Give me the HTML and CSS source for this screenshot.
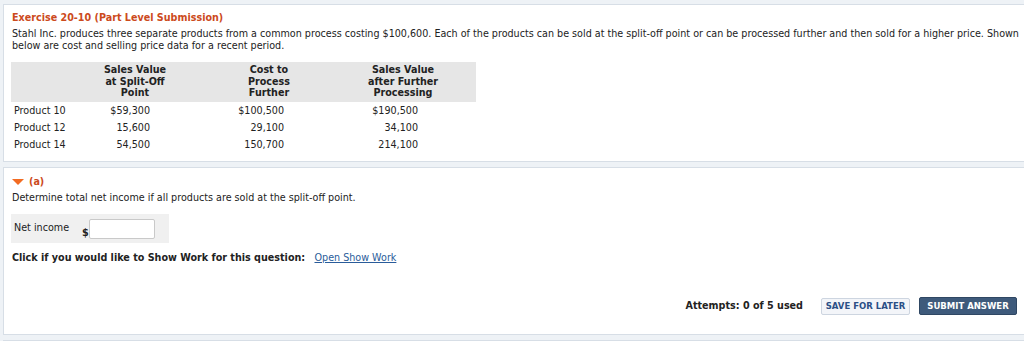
FILE: index.html
```html
<!DOCTYPE html>
<html lang="en">
<head>
  <meta charset="UTF-8" />
  <title>Exercise 20-10</title>
  <link rel="stylesheet" href="styles.css">
</head>
<body>
  <div class="panel question">
    <h2 class="title">Exercise 20-10 (Part Level Submission)</h2>
    <p class="intro">Stahl Inc. produces three separate products from a common process costing $100,600. Each of the products can be sold at the split-off point or can be processed further and then sold for a higher price. Shown below are cost and selling price data for a recent period.</p>

    <div class="data-table">
      <div class="head blank"></div>
      <div class="head">Sales Value<br>at Split-Off<br>Point</div>
      <div class="head">Cost to<br>Process<br>Further</div>
      <div class="head">Sales Value<br>after Further<br>Processing</div>
      <div class="head blank"></div>

      <div class="label">Product 10</div>
      <div class="num">$59,300</div>
      <div class="num">$100,500</div>
      <div class="num">$190,500</div>
      <div></div>

      <div class="label">Product 12</div>
      <div class="num">15,600</div>
      <div class="num">29,100</div>
      <div class="num">34,100</div>
      <div></div>

      <div class="label">Product 14</div>
      <div class="num">54,500</div>
      <div class="num">150,700</div>
      <div class="num">214,100</div>
      <div></div>
    </div>
  </div>

  <div class="panel part">
    <div class="part-title"><span class="caret"></span>(a)</div>
    <p class="prompt">Determine total net income if all products are sold at the split-off point.</p>

    <div class="answer-box">
      <span class="answer-label">Net income</span>
      <span class="dollar">$</span>
      <input type="text" class="answer-input">
    </div>

    <p class="show-work">Click if you would like to Show Work for this question: <a href="#">Open Show Work</a></p>

    <div class="actions">
      <span class="attempts">Attempts: 0 of 5 used</span>
      <button class="btn save">SAVE FOR LATER</button>
      <button class="btn submit">SUBMIT ANSWER</button>
    </div>
  </div>

  <div class="panel next"></div>
</body>
</html>
```

FILE: styles.css
```css
* {
  box-sizing: border-box;
  margin: 0;
  padding: 0;
}
body {
  background: #eef2f6;
  padding: 4px 0 0 3px;
  font-family: 'DejaVu Sans', Verdana, sans-serif;
  font-size: 9.6px;
  line-height: 12px;
  color: #222;
  overflow: hidden;
}
.panel {
  background: white;
  border: 1px solid #d7dee6;
  border-right: none;
  margin-bottom: 5px;
}
.question {
  padding: 7px 0 8px 8px;
  height: 158px;
}
.title {
  font-size: 9.6px;
  font-weight: bold;
  color: #cc4a1c;
  line-height: 12px;
  margin-bottom: 4px;
}
.intro {
  margin-bottom: 10px;
}
.data-table {
  display: grid;
  grid-template-columns: 57px 134px 134px 134px 6px;
  margin-left: -1px;
}
.head {
  background: #e6e6e6;
  font-weight: bold;
  text-align: center;
  line-height: 11.5px;
  padding: 2px 0 3px;
}
.label,
.num {
  line-height: 17px;
}
.label {
  padding-left: 3px;
}
.num {
  text-align: right;
  padding-right: 52px;
}
.part {
  padding: 8px 7px 8px 8px;
  height: 168px;
}
.part-title {
  font-weight: bold;
  color: #cc4a1c;
  display: flex;
  align-items: center;
  gap: 5px;
}
.caret {
  width: 0;
  height: 0;
  border-left: 6px solid transparent;
  border-right: 6px solid transparent;
  border-top: 6px solid #f26b22;
}
.prompt {
  margin-top: 4px;
}
.answer-box {
  margin-top: 10px;
  margin-left: -1px;
  width: 158px;
  height: 29px;
  background: #f0f0f0;
  display: flex;
  align-items: flex-start;
  padding: 5px 0 0 3px;
}
.answer-label {
  margin-top: 3px;
  width: 68px;
}
.dollar {
  font-weight: bold;
  margin-top: 8px;
  width: 7px;
}
.answer-input {
  width: 66px;
  height: 20px;
  border: 1px solid #c9c9c9;
  border-radius: 2px;
  background: white;
}
.show-work {
  margin-top: 9px;
  font-weight: bold;
}
.show-work a {
  font-weight: normal;
  color: #2a5c9a;
  margin-left: 6px;
}
.actions {
  margin-top: 33px;
  display: flex;
  justify-content: flex-end;
  align-items: center;
}
.attempts {
  font-weight: bold;
  margin-right: 18px;
}
.btn {
  font-family: 'DejaVu Sans', Verdana, sans-serif;
  font-size: 8.5px;
  font-weight: bold;
  height: 17px;
  border-radius: 2px;
  cursor: pointer;
}
.save {
  width: 89px;
  background: #f3f5f9;
  color: #2b4f86;
  border: 1px solid #cdd5e0;
  margin-right: 9px;
}
.submit {
  width: 98px;
  height: 18px;
  background: #3e5a7b;
  color: white;
  border: 1px solid #2f4763;
}
.next {
  height: 2px;
  margin-bottom: 0;
}
```
